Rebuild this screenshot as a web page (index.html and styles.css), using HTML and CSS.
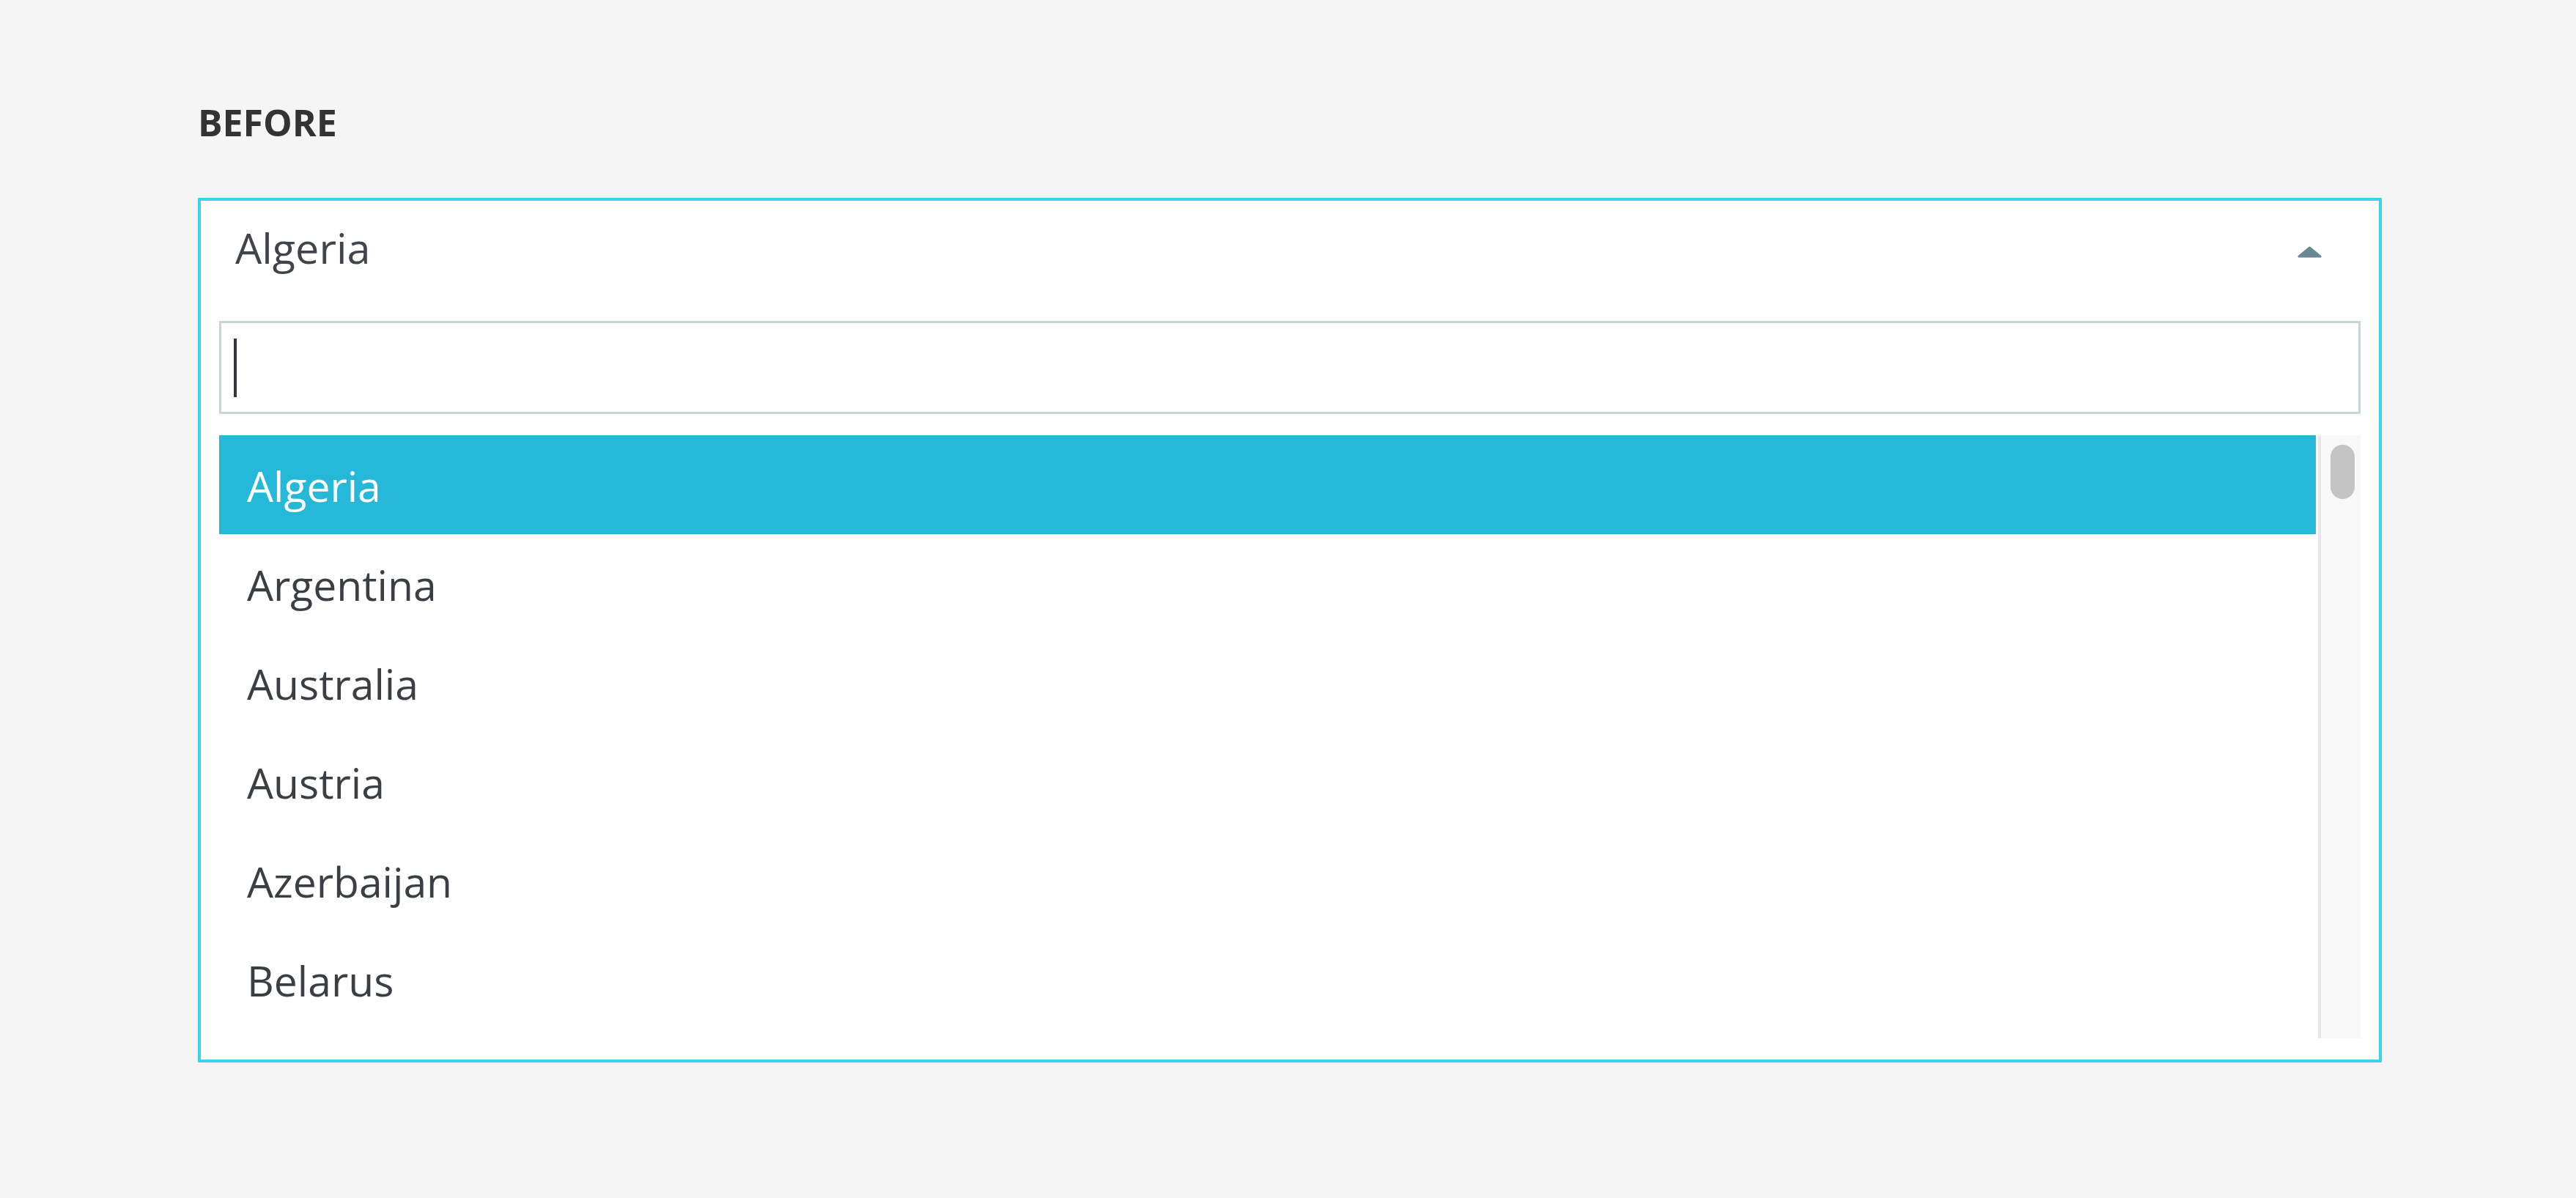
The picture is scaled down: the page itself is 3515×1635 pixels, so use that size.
FILE: index.html
```html
<!DOCTYPE html>
<html lang="en">
<head>
<meta charset="utf-8">
<title>Before</title>
<link rel="stylesheet" href="styles.css">
</head>
<body>
<main class="page">
  <h2 class="label">BEFORE</h2>
  <div class="select">
    <div class="select-head">
      <span class="select-value">Algeria</span>
      <svg class="select-arrow" width="33" height="16" viewBox="0 0 33 16" aria-hidden="true">
        <polygon points="16.5,2 31,14 2,14" fill="#6b8892" stroke="#6b8892" stroke-width="3" stroke-linejoin="round"/>
      </svg>
    </div>
    <div class="search"><span class="caret"></span></div>
    <div class="results">
      <ul class="options">
        <li class="option is-active">Algeria</li>
        <li class="option">Argentina</li>
        <li class="option">Australia</li>
        <li class="option">Austria</li>
        <li class="option">Azerbaijan</li>
        <li class="option">Belarus</li>
      </ul>
      <div class="scrollbar"><div class="thumb"></div></div>
    </div>
  </div>
</main>
</body>
</html>
```

FILE: styles.css
```css
html, body {
  margin: 0;
  padding: 0;
  background: #f5f5f5;
}
body {
  font-family: "Open Sans", "Noto Sans", "Liberation Sans", sans-serif;
  color: #3b3e43;
}
.page {
  padding: 133px 0 0 270px;
  width: 2980px;
}
.label {
  margin: 0 0 69px 0;
  font-size: 50px;
  line-height: 68px;
  font-weight: 700;
  color: #333333;
  letter-spacing: 0;
}
.select {
  box-sizing: border-box;
  width: 2980px;
  border: 4px solid #3fd2f0;
  background: #ffffff;
  padding: 0 25px 29px 25px;
}
.select-head {
  display: flex;
  align-items: flex-start;
  justify-content: space-between;
  height: 128px;
  padding: 0 53px 0 22px;
}
.select-value {
  font-size: 57.5px;
  line-height: 128px;
  color: #41454b;
}
.select-arrow {
  display: block;
  margin-top: 62px;
}
.search {
  box-sizing: border-box;
  height: 127px;
  margin-top: 36px;
  border: 3px solid #c7d5db;
  background: #ffffff;
  display: flex;
  align-items: center;
  padding-left: 17px;
}
.caret {
  display: block;
  width: 4px;
  height: 80px;
  background: #33363b;
}
.results {
  display: flex;
  height: 823px;
  margin-top: 29px;
  overflow: hidden;
}
.options {
  flex: 1;
  margin: 0 3px 0 0;
  padding: 0;
  list-style: none;
}
.option {
  box-sizing: border-box;
  height: 135px;
  padding: 3px 0 0 38px;
  font-size: 57px;
  line-height: 132px;
  color: #3b3e43;
  white-space: nowrap;
}
.option.is-active {
  background: #25b8d9;
  color: #ffffff;
}
.scrollbar {
  box-sizing: border-box;
  width: 58px;
  height: 823px;
  border-left: 4px solid #e8e8e8;
  background: #f8f8f8;
  padding: 13px 0 0 13px;
}
.thumb {
  width: 33px;
  height: 74px;
  border-radius: 17px;
  background: #c4c4c4;
}
```
